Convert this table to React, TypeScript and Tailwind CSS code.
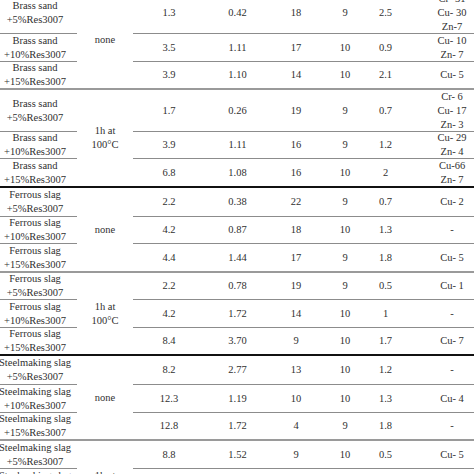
type Row = {
  h: string;
  name: string;
  mix: string;
  vals: string[];
  metals: string[];
};

type Group = {
  treatment: string[];
  edge: string;
  rows: Row[];
};

const groups: Group[] = [
  {
    treatment: ['none'],
    edge: 'border-b-2 border-[#9a9a9a]',
    rows: [
      { h: 'h-[42px]', name: 'Brass sand', mix: '+5%Res3007', vals: ['1.3', '0.42', '18', '9', '2.5'], metals: ['Cr- 31', 'Cu- 30', 'Zn-7'] },
      { h: 'h-[28px]', name: 'Brass sand', mix: '+10%Res3007', vals: ['3.5', '1.11', '17', '10', '0.9'], metals: ['Cu- 10', 'Zn- 7'] },
      { h: 'h-[26px]', name: 'Brass sand', mix: '+15%Res3007', vals: ['3.9', '1.10', '14', '10', '2.1'], metals: ['Cu- 5'] },
    ],
  },
  {
    treatment: ['1h at', '100°C'],
    edge: 'border-b-2 border-[#111]',
    rows: [
      { h: 'h-[42px]', name: 'Brass sand', mix: '+5%Res3007', vals: ['1.7', '0.26', '19', '9', '0.7'], metals: ['Cr- 6', 'Cu- 17', 'Zn- 3'] },
      { h: 'h-[27px]', name: 'Brass sand', mix: '+10%Res3007', vals: ['3.9', '1.11', '16', '9', '1.2'], metals: ['Cu- 29', 'Zn- 4'] },
      { h: 'h-[27px]', name: 'Brass sand', mix: '+15%Res3007', vals: ['6.8', '1.08', '16', '10', '2'], metals: ['Cu-66', 'Zn- 7'] },
    ],
  },
  {
    treatment: ['none'],
    edge: 'border-b-2 border-[#9a9a9a]',
    rows: [
      { h: 'h-[29px]', name: 'Ferrous slag', mix: '+5%Res3007', vals: ['2.2', '0.38', '22', '9', '0.7'], metals: ['Cu- 2'] },
      { h: 'h-[27px]', name: 'Ferrous slag', mix: '+10%Res3007', vals: ['4.2', '0.87', '18', '10', '1.3'], metals: ['-'] },
      { h: 'h-[27px]', name: 'Ferrous slag', mix: '+15%Res3007', vals: ['4.4', '1.44', '17', '9', '1.8'], metals: ['Cu- 5'] },
    ],
  },
  {
    treatment: ['1h at', '100°C'],
    edge: 'border-b-2 border-[#111]',
    rows: [
      { h: 'h-[27px]', name: 'Ferrous slag', mix: '+5%Res3007', vals: ['2.2', '0.78', '19', '9', '0.5'], metals: ['Cu- 1'] },
      { h: 'h-[28px]', name: 'Ferrous slag', mix: '+10%Res3007', vals: ['4.2', '1.72', '14', '10', '1'], metals: ['-'] },
      { h: 'h-[26px]', name: 'Ferrous slag', mix: '+15%Res3007', vals: ['8.4', '3.70', '9', '10', '1.7'], metals: ['Cu- 7'] },
    ],
  },
  {
    treatment: ['none'],
    edge: 'border-b-2 border-[#9a9a9a]',
    rows: [
      { h: 'h-[29px]', name: 'Steelmaking slag', mix: '+5%Res3007', vals: ['8.2', '2.77', '13', '10', '1.2'], metals: ['-'] },
      { h: 'h-[28px]', name: 'Steelmaking slag', mix: '+10%Res3007', vals: ['12.3', '1.19', '10', '10', '1.3'], metals: ['Cu- 4'] },
      { h: 'h-[26px]', name: 'Steelmaking slag', mix: '+15%Res3007', vals: ['12.8', '1.72', '4', '9', '1.8'], metals: ['-'] },
    ],
  },
  {
    treatment: ['1h at', '100°C'],
    edge: '',
    rows: [
      { h: 'h-[28px]', name: 'Steelmaking slag', mix: '+5%Res3007', vals: ['8.8', '1.52', '9', '10', '0.5'], metals: ['Cu- 5'] },
      { h: 'h-[28px]', name: 'Steelmaking slag', mix: '+10%Res3007', vals: ['', '', '', '', ''], metals: [''] },
      { h: 'h-[28px]', name: 'Steelmaking slag', mix: '+15%Res3007', vals: ['', '', '', '', ''], metals: [''] },
    ],
  },
];

const colWidths = ['w-[72px]', 'w-[65px]', 'w-[52px]', 'w-[46px]', 'w-[35px]'];

function GroupBlock({ group }: { group: Group }) {
  const last = group.rows.length - 1;
  return (
    <div className={`flex ${group.edge}`}>
      {/* sample column */}
      <div className="flex w-[84px] flex-col">
        {group.rows.map((r, i) => (
          <div
            key={i}
            className={`${r.h} flex flex-col items-center justify-center ${i < last ? 'border-b border-[#8c8c8c]' : ''}`}
          >
            <span>{r.name}</span>
            <span>{r.mix}</span>
          </div>
        ))}
      </div>

      {/* treatment, spans the whole group */}
      <div className="flex w-[56px] flex-col items-center justify-center">
        {group.treatment.map((t) => (
          <span key={t}>{t}</span>
        ))}
      </div>

      {/* measured values */}
      <div className="flex flex-1 flex-col">
        {group.rows.map((r, i) => (
          <div key={i} className={`${r.h} flex items-center ${i < last ? 'border-b border-[#8c8c8c]' : ''}`}>
            {r.vals.map((v, j) => (
              <div key={j} className={`${colWidths[j]} text-center`}>
                {v}
              </div>
            ))}
            <div className="flex w-[98px] flex-col items-center">
              {r.metals.map((m, k) => (
                <span key={k}>{m}</span>
              ))}
            </div>
          </div>
        ))}
      </div>
    </div>
  );
}

export default function App() {
  return (
    <div className="h-[474px] w-[474px] overflow-hidden bg-white font-['Liberation_Serif',serif] text-[10.5px] leading-[14px] text-[#303030]">
      <div className="ml-[-7px] mt-[-8px] w-[546px]">
        {groups.map((g, i) => (
          <GroupBlock key={i} group={g} />
        ))}
      </div>
    </div>
  );
}
